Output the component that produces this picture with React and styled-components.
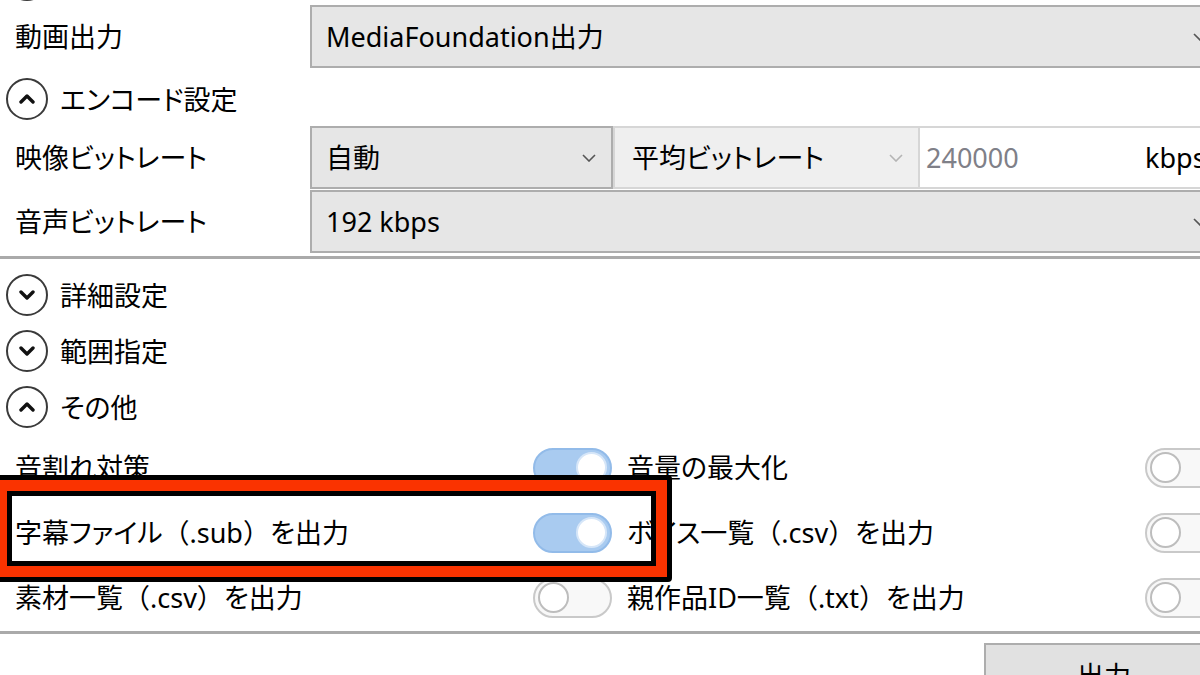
import React from 'react'
import styled, { createGlobalStyle } from 'styled-components'

const GlobalStyle = createGlobalStyle`
  html, body {
    margin: 0;
    padding: 0;
    background: #fff;
  }
  body {
    font-family: "Noto Sans", "Noto Sans CJK JP", sans-serif;
    font-feature-settings: "palt";
  }
`

const Screen = styled.div`
  position: relative;
  width: 1200px;
  height: 675px;
  overflow: hidden;
  background: #fff;
  color: #000;
  font-size: 27px;
  line-height: 1;
`

const Panel = styled.div`
  display: flex;
  flex-direction: column;
  width: 1224px;
  margin-top: -44px;
`

/* collapsible section header */
const Header = styled.div`
  display: flex;
  align-items: center;
  gap: 12px;
  box-sizing: border-box;
  height: ${({ $h }) => $h || 56}px;
  padding-left: 6px;
  padding-top: ${({ $pt }) => $pt || 0}px;
  margin-top: ${({ $mt }) => $mt || 0}px;
`

const Circle = styled.span`
  display: flex;
  align-items: center;
  justify-content: center;
  box-sizing: border-box;
  width: 42px;
  height: 42px;
  border: 2.5px solid #3a3a3a;
  border-radius: 50%;
  flex-shrink: 0;
`

const HeaderText = styled.span`
  white-space: nowrap;
`

const FormRow = styled.div`
  display: grid;
  grid-template-columns: 295px 1fr;
  align-items: end;
  height: ${({ $h }) => $h || 64}px;
  padding-left: 15px;
`

const Label = styled.span`
  align-self: center;
  white-space: nowrap;
`

const Combo = styled.div`
  display: flex;
  align-items: center;
  justify-content: space-between;
  box-sizing: border-box;
  height: 63px;
  padding: 0 15px 0 ${({ $pl }) => $pl || 14}px;
  background: ${({ $disabled }) => ($disabled ? '#efefef' : '#e6e6e6')};
  border: 2px solid ${({ $disabled }) => ($disabled ? '#d6d6d6' : '#adadad')};
  white-space: nowrap;
`

const FieldGroup = styled.div`
  display: grid;
  grid-template-columns: 303px 307px 1fr;
`

const TextBox = styled.div`
  display: grid;
  grid-template-columns: 1fr 79px;
  align-items: center;
  box-sizing: border-box;
  height: 63px;
  padding-left: 6px;
  background: #fff;
  border-top: 2px solid #d6d6d6;
  border-bottom: 2px solid #d6d6d6;
`

const Value = styled.span`
  color: #7f8088;
`

const Unit = styled.span`
  color: #000;
`

const Separator = styled.div`
  height: 3px;
  background: #aaaaaa;
  margin-top: ${({ $mt }) => $mt || 0}px;
`

const ToggleGrid = styled.div`
  display: grid;
  grid-template-columns: 597px 597px;
  grid-auto-rows: 65px;
  column-gap: 15px;
  padding-left: 15px;
`

const ToggleCell = styled.div`
  display: flex;
  align-items: center;
  justify-content: space-between;
  white-space: nowrap;
`

/* full-width brackets keep their full width */
const Paren = styled.span`
  font-feature-settings: normal;
`

const Switch = styled.span`
  display: flex;
  align-items: center;
  justify-content: ${({ $on }) => ($on ? 'flex-end' : 'flex-start')};
  box-sizing: border-box;
  width: 79px;
  height: 40px;
  padding: 0 3px;
  border-radius: 20px;
  border: 2px solid ${({ $on }) => ($on ? '#92bbe9' : '#c9c9c9')};
  background: ${({ $on }) => ($on ? '#a9cbf0' : '#f8f8f8')};
  flex-shrink: 0;
`

const Knob = styled.span`
  box-sizing: border-box;
  width: 31px;
  height: 31px;
  border-radius: 50%;
  background: #fff;
  border: 2px solid ${({ $on }) => ($on ? '#d6e6f8' : '#bdbdbd')};
`

const ButtonRow = styled.div`
  display: flex;
  justify-content: flex-end;
  padding-top: 9px;
`

const Button = styled.div`
  display: flex;
  align-items: center;
  justify-content: center;
  box-sizing: border-box;
  width: 240px;
  height: 64px;
  background: #e1e1e1;
  border: 2px solid #adadad;
`

/* red annotation frame lying over the screenshot */
const Highlight = styled.div`
  position: absolute;
  left: -9px;
  top: 475px;
  width: 681px;
  height: 107px;
  box-sizing: border-box;
  border: 5px solid #000;
  border-radius: 4px;
  box-shadow: inset 0 0 0 11px #fa3300, inset 0 0 0 16px #000;
  pointer-events: none;
`

const Chevron = ({ up }) => (
  <svg width="16" height="10" viewBox="0 0 16 10">
    <polyline
      points={up ? '2,8 8,2 14,8' : '2,2 8,8 14,2'}
      fill="none"
      stroke="#111"
      strokeWidth="3.4"
      strokeLinecap="round"
      strokeLinejoin="round"
    />
  </svg>
)

const DropArrow = ({ light }) => (
  <svg width="14" height="8" viewBox="0 0 14 8">
    <polyline
      points="1,1 7,7 13,1"
      fill="none"
      stroke={light ? '#b4b4b4' : '#555'}
      strokeWidth="1.6"
    />
  </svg>
)

const Section = ({ title, open, ...rest }) => (
  <Header {...rest}>
    <Circle>
      <Chevron up={open} />
    </Circle>
    {title && <HeaderText>{title}</HeaderText>}
  </Header>
)

const LabelText = ({ text }) => (
  <span>
    {text.split(/([（）])/).map((part, i) =>
      part === '（' || part === '）' ? <Paren key={i}>{part}</Paren> : part
    )}
  </span>
)

const toggles = [
  { label: '音割れ対策', on: true },
  { label: '音量の最大化', on: false },
  { label: '字幕ファイル（.sub）を出力', on: true },
  { label: 'ボイス一覧（.csv）を出力', on: false },
  { label: '素材一覧（.csv）を出力', on: false },
  { label: '親作品ID一覧（.txt）を出力', on: false },
]

export default function App() {
  return (
    <Screen>
      <GlobalStyle />
      <Panel>
        {/* header of the section above, scrolled mostly out of view */}
        <Section open $h={48} />

        <FormRow>
          <Label>動画出力</Label>
          <Combo>
            <span>MediaFoundation出力</span>
            <DropArrow />
          </Combo>
        </FormRow>

        <Section title="エンコード設定" open $h={58} $pt={4} />

        <FormRow $h={63}>
          <Label>映像ビットレート</Label>
          <FieldGroup>
            <Combo>
              <span>自動</span>
              <DropArrow />
            </Combo>
            <Combo $disabled $pl={17}>
              <span>平均ビットレート</span>
              <DropArrow light />
            </Combo>
            <TextBox>
              <Value>240000</Value>
              <Unit>kbps</Unit>
            </TextBox>
          </FieldGroup>
        </FormRow>

        <FormRow>
          <Label>音声ビットレート</Label>
          <Combo>
            <span>192 kbps</span>
            <DropArrow />
          </Combo>
        </FormRow>

        <Separator $mt={3} />

        <Section title="詳細設定" $mt={8} />
        <Section title="範囲指定" />
        <Section title="その他" open />

        <ToggleGrid>
          {toggles.map((t) => (
            <ToggleCell key={t.label}>
              <LabelText text={t.label} />
              <Switch $on={t.on}>
                <Knob $on={t.on} />
              </Switch>
            </ToggleCell>
          ))}
        </ToggleGrid>

        <Separator $mt={1} />

        <ButtonRow>
          <Button>出力</Button>
        </ButtonRow>
      </Panel>
      <Highlight />
    </Screen>
  )
}
